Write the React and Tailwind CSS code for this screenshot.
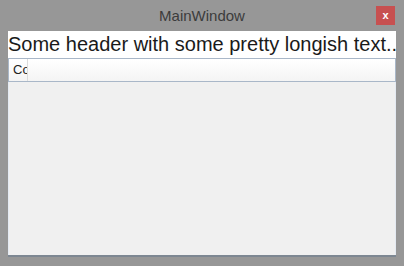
export default function App() {
  return (
    <div
      className="w-[404px] h-[266px] bg-[#979797] flex flex-col overflow-hidden"
      style={{ fontFamily: '"Liberation Sans", Arial, sans-serif' }}
    >
      {/* Title bar */}
      <div className="h-[31px] flex items-start relative">
        <div className="flex-1 text-center text-[15px] text-[#3c3c3c] pt-[6px] leading-[20px]">MainWindow</div>
        <div className="absolute left-[376px] top-[6px] w-[19px] h-[19px] bg-[#c75050] flex items-center justify-center text-white text-[11px] font-bold leading-none">
          x
        </div>
      </div>

      {/* Client area */}
      <div className="mx-[8px] w-[388px] h-[226px] bg-[#f0f0f0] border-b-2 border-[#7d8792] flex flex-col">
        <div className="h-[27px] bg-white overflow-hidden whitespace-nowrap text-[20px] leading-[27px] text-[#1a1a1a] tracking-[0px]">
          Some header with some pretty longish text..
        </div>
        <div className="h-[24px] flex border border-[#a9b7c8] bg-gradient-to-b from-white to-[#f4f4f4]">
          <div className="w-[19px] border-r border-[#dcdcdc] overflow-hidden whitespace-nowrap text-[13px] leading-[22px] pl-[4px] text-[#222]">
            Co
          </div>
          <div className="flex-1" />
        </div>
        <div className="flex-1 border-x border-[#e4eaf2]" />
      </div>
    </div>
  );
}
